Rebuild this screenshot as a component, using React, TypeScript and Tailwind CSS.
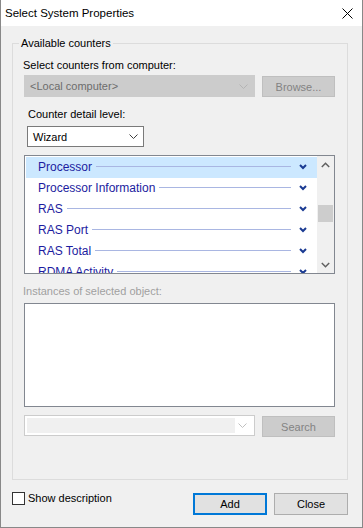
import React from "react";

const font = { fontFamily: '"Liberation Sans", Arial, sans-serif' };

function ComboChevron({ color }: { color: string }) {
  return (
    <svg width="9" height="5" viewBox="0 0 9 5" className="block">
      <polyline points="0.5,0.5 4.5,4.5 8.5,0.5" fill="none" stroke={color} strokeWidth="1" />
    </svg>
  );
}

function RowChevron() {
  return (
    <svg width="8" height="6" viewBox="0 0 8 6" className="block">
      <polyline points="1,1 4,4 7,1" fill="none" stroke="#1a3a92" strokeWidth="2" />
    </svg>
  );
}

function ScrollArrow({ up }: { up?: boolean }) {
  return (
    <svg width="9" height="6" viewBox="0 0 9 6" className="block">
      <polyline
        points={up ? "0.8,5 4.5,1.3 8.2,5" : "0.8,1 4.5,4.7 8.2,1"}
        fill="none"
        stroke="#606060"
        strokeWidth="1.5"
      />
    </svg>
  );
}

const rows = ["Processor", "Processor Information", "RAS", "RAS Port", "RAS Total", "RDMA Activity"];

export default function App() {
  return (
    <div
      className="w-[363px] h-[528px] bg-[#f0f0f0] border-l border-r border-b border-[#888888] flex flex-col text-[11px] leading-[16px] text-black overflow-hidden"
      style={font}
    >
      {/* Title bar */}
      <div className="h-[26px] bg-white flex items-center justify-between pl-[4px] pr-[9px] shrink-0">
        <span className="text-[11.5px] whitespace-nowrap">Select System Properties</span>
        <svg width="11" height="11" viewBox="0 0 11 11" className="block">
          <path d="M0.5 0.5 L10.5 10.5 M10.5 0.5 L0.5 10.5" stroke="#000" strokeWidth="1" />
        </svg>
      </div>

      <div className="pl-[11px] flex flex-col">
        {/* Group box */}
        <div className="relative mt-[17px] w-[336px] h-[437px] border border-[#dcdcdc] pl-[10px] flex flex-col">
          <span className="absolute left-[6px] top-[-9px] px-[2px] bg-[#f0f0f0] whitespace-nowrap">Available counters</span>

          <div className="mt-[13px] whitespace-nowrap">Select counters from computer:</div>
          <div className="mt-[2px] ml-[1px] flex items-start gap-[7px]">
            <div className="w-[231px] h-[22px] bg-[#cccccc] border border-[#cccccc] flex items-center justify-between pl-[5px] pr-[6px] text-[#6d6d6d]">
              <span className="whitespace-nowrap">&lt;Local computer&gt;</span>
              <ComboChevron color="#b4b4b4" />
            </div>
            <div className="w-[73px] h-[21px] mt-[1px] bg-[#cccccc] border border-[#bfbfbf] flex items-center justify-center text-[#838383] whitespace-nowrap">
              Browse...
            </div>
          </div>

          <div className="mt-[9px] ml-[5px] whitespace-nowrap">Counter detail level:</div>
          <div className="mt-[4px] ml-[4px] w-[117px] h-[21px] bg-white border border-[#7a7a7a] flex items-center justify-between pl-[5px] pr-[5px]">
            <span>Wizard</span>
            <ComboChevron color="#404040" />
          </div>

          {/* List */}
          <div className="mt-[8px] ml-[1px] w-[311px] h-[119px] bg-white border border-[#828790] flex overflow-hidden">
            <div className="flex-1 pl-[1px] pt-[1px] overflow-hidden text-[12px]">
              {rows.map((r, i) => (
                <div
                  key={r}
                  className={
                    "h-[21px] flex items-center pl-[12px] pr-[10px] pb-[2px] text-[#1c1ca0] " +
                    (i === 0 ? "bg-[#cce8ff]" : "")
                  }
                >
                  <span className="whitespace-nowrap">{r}</span>
                  <div className="ml-[4px] flex-1 h-[1px] bg-[#a9b6e2]" />
                  <div className="ml-[8px]">
                    <RowChevron />
                  </div>
                </div>
              ))}
            </div>
            <div className="w-[17px] bg-[#f0f0f0] flex flex-col">
              <div className="h-[17px] flex items-center justify-center">
                <ScrollArrow up />
              </div>
              <div className="flex-1">
                <div className="mt-[32px] mx-[1px] h-[17px] bg-[#cdcdcd]" />
              </div>
              <div className="h-[17px] flex items-center justify-center">
                <ScrollArrow />
              </div>
            </div>
          </div>

          <div className="mt-[9px] text-[#a0a0a0] whitespace-nowrap">Instances of selected object:</div>
          <div className="mt-[4px] ml-[1px] w-[311px] h-[104px] bg-white border border-[#828790]" />

          <div className="mt-[8px] ml-[1px] flex items-start gap-[7px]">
            <div className="w-[231px] h-[21px] bg-white border border-[#cccccc] flex items-center pl-[2px] pr-[4px]">
              <div className="w-[208px] h-[15px] bg-[#f0f0f0]" />
              <div className="flex-1 flex justify-center">
                <ComboChevron color="#c0c0c0" />
              </div>
            </div>
            <div className="w-[73px] h-[21px] mt-[1px] bg-[#cccccc] border border-[#bfbfbf] flex items-center justify-center text-[#838383]">
              Search
            </div>
          </div>
        </div>

        {/* Bottom row */}
        <div className="w-[336px] flex items-start justify-between">
          <div className="mt-[10px] flex items-center">
            <div className="w-[13px] h-[13px] bg-white border border-[#333333]" />
            <span className="ml-[3px] whitespace-nowrap">Show description</span>
          </div>
          <div className="mt-[13px] flex gap-[7px]">
            <div className="w-[74px] h-[22px] bg-[#e1e1e1] border-2 border-[#0078d7] flex items-center justify-center">
              Add
            </div>
            <div className="w-[74px] h-[22px] bg-[#e1e1e1] border border-[#adadad] flex items-center justify-center">
              Close
            </div>
          </div>
        </div>
      </div>
    </div>
  );
}
